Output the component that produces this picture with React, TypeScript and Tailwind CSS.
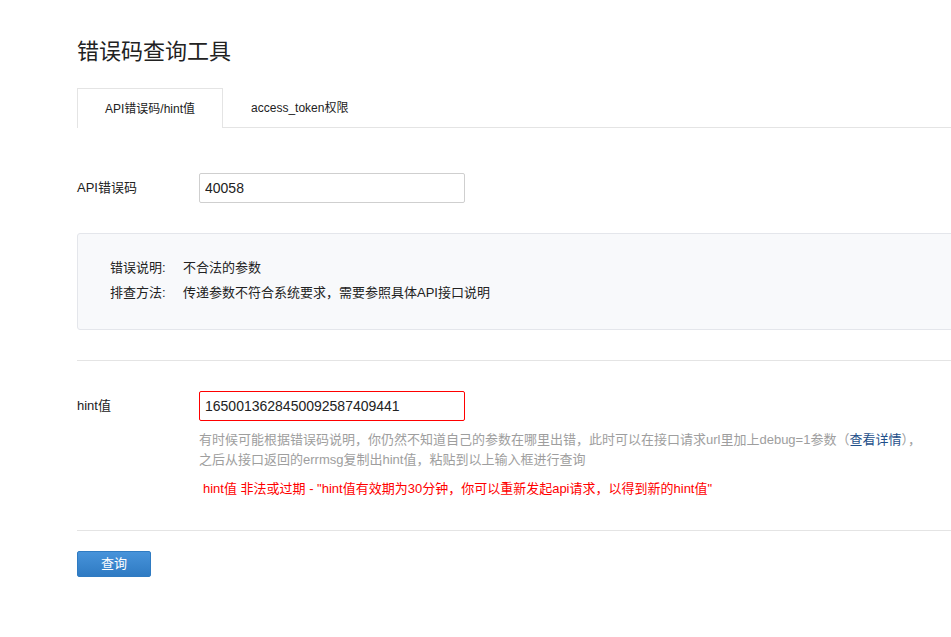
import React from "react";

export default function App() {
  return (
    <div
      className="w-[951px] h-[637px] overflow-hidden bg-white text-[#353535]"
      style={{ fontFamily: '"Liberation Sans", "Noto Sans CJK SC", sans-serif' }}
    >
      <div className="ml-[77px] w-[960px]">
        <h1 className="pt-[37px] h-[67px] text-[22px] leading-[30px] font-normal text-[#222]">
          错误码查询工具
        </h1>

        {/* Tabs */}
        <div className="mt-[21px] flex h-[40px] border-b border-[#e4e4e4]">
          <div className="-mb-px h-[40px] flex items-center border border-b-0 border-[#e4e4e4] bg-white px-[27px] text-[12px] text-[#222]">
            API错误码/hint值
          </div>
          <div className="h-[39px] flex items-center border border-transparent border-b-0 px-[27px] text-[12px] text-[#222]">
            access_token权限
          </div>
        </div>

        {/* API error code row */}
        <div className="mt-[45px] flex items-center h-[30px]">
          <label className="w-[122px] text-[13px] text-[#222]">API错误码</label>
          <input
            className="w-[266px] h-[30px] border border-[#cfcfcf] rounded-[2px] px-[5px] text-[14px] text-[#222] outline-none"
            defaultValue="40058"
          />
        </div>

        {/* Error description box */}
        <div className="mt-[30px] h-[97px] border border-[#e4e6eb] rounded-[3px] bg-[#f8f9fb] pt-[21px] pl-[32px] text-[13px] leading-[25px] text-[#222]">
          <div className="flex">
            <span className="w-[73px]">错误说明:</span>
            <span>不合法的参数</span>
          </div>
          <div className="flex">
            <span className="w-[73px]">排查方法:</span>
            <span>传递参数不符合系统要求，需要参照具体API接口说明</span>
          </div>
        </div>

        <div className="mt-[30px] border-t border-[#e4e4e4]" />

        {/* Hint row */}
        <div className="mt-[30px] flex items-center h-[30px]">
          <label className="w-[122px] text-[13px] text-[#222]">hint值</label>
          <input
            className="w-[266px] h-[30px] border border-[#ff0000] rounded-[2px] px-[5px] text-[14px] text-[#222] outline-none"
            defaultValue="1650013628450092587409441"
          />
        </div>
        <div className="ml-[122px] mt-[9px] text-[13px] leading-[20px] text-[#9e9e9e] whitespace-nowrap">
          有时候可能根据错误码说明，你仍然不知道自己的参数在哪里出错，此时可以在接口请求url里加上debug=1参数（
          <a className="text-[#1e4f8a]">查看详情</a>），
          <br />
          之后从接口返回的errmsg复制出hint值，粘贴到以上输入框进行查询
        </div>
        <div className="ml-[122px] mt-[9px] pl-[4px] text-[13px] leading-[20px] text-[#ff0000] whitespace-nowrap">
          hint值 非法或过期 - "hint值有效期为30分钟，你可以重新发起api请求，以得到新的hint值"
        </div>

        <div className="mt-[31px] border-t border-[#e4e4e4]" />

        <button className="mt-[20px] w-[74px] h-[26px] rounded-[2px] border border-[#2f7bc2] bg-gradient-to-b from-[#4793da] to-[#2f7bc3] text-white text-[13px] leading-[24px]">
          查询
        </button>
      </div>
    </div>
  );
}
